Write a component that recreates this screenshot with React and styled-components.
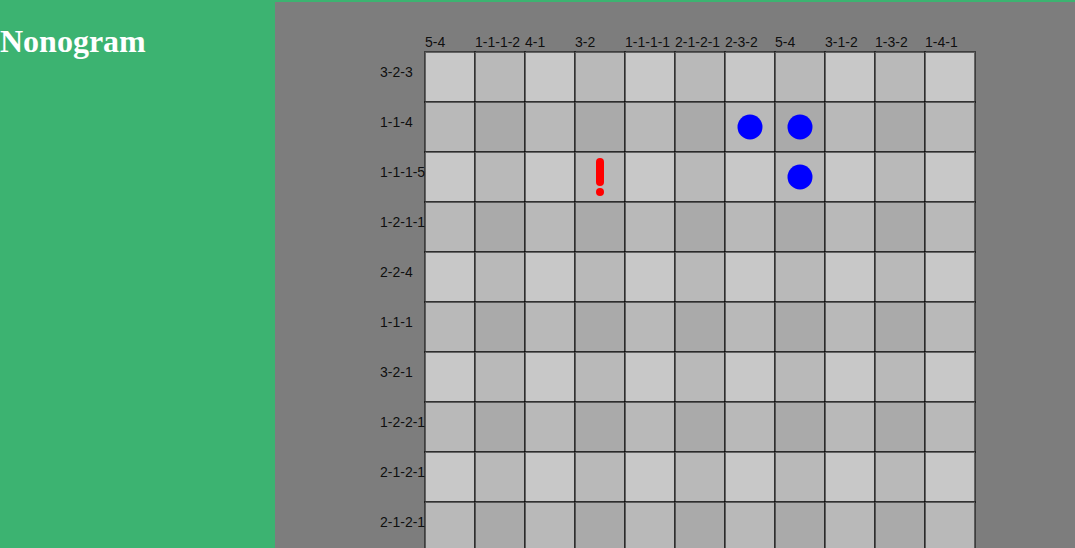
import React from "react";
import styled, { createGlobalStyle } from "styled-components";

const columnHints = ["5-4", "1-1-1-2", "4-1", "3-2", "1-1-1-1", "2-1-2-1", "2-3-2", "5-4", "3-1-2", "1-3-2", "1-4-1"];

const rowHints = ["3-2-3", "1-1-4", "1-1-1-5", "1-2-1-1", "2-2-4", "1-1-1", "3-2-1", "1-2-2-1", "2-1-2-1", "2-1-2-1"];

// Keys are "row-column"
const marks = {
  "1-6": "filled",
  "1-7": "filled",
  "2-3": "error",
  "2-7": "filled",
};

const shades = ["#c8c8c8", "#b9b9b9", "#aaaaaa"];

// Styled Components
const GlobalStyle = createGlobalStyle`
  body {
    margin: 0;
    background: mediumseagreen;
  }
`;

const Page = styled.div`
  display: flex;
  height: 100vh;
  overflow: hidden;
`;

const Sidebar = styled.aside`
  flex: 0 0 275px;
`;

const Title = styled.h1`
  margin: 23px 0 0;
  color: white;
  font-family: "Liberation Serif", "Times New Roman", serif;
  font-size: 32px;
  font-weight: bold;
  line-height: 36px;
`;

const Board = styled.main`
  flex: 1;
  min-width: 0;
  margin-top: 2px;
  padding-left: 105px;
  background: #7d7d7d;
`;

const Puzzle = styled.table`
  border-collapse: separate;
  border-spacing: 0;
  table-layout: fixed;
  width: 595px;
  color: rgba(0, 0, 0, 0.9);
  font-family: "Liberation Sans", Arial, sans-serif;
  font-size: 14px;
  line-height: 16px;
`;

const Corner = styled.td`
  width: 45px;
  padding: 0;
`;

const ColumnHint = styled.th`
  width: 50px;
  height: 48px;
  padding: 0 0 2px;
  font-weight: normal;
  text-align: left;
  vertical-align: bottom;
  white-space: nowrap;
`;

const RowHint = styled.th`
  padding: 0 0 10px;
  font-weight: normal;
  text-align: left;
  vertical-align: middle;
  white-space: nowrap;
`;

const Cell = styled.td`
  padding: 0;
`;

const CellButton = styled.button`
  display: block;
  width: 50px;
  height: 50px;
  padding: 0;
  border: 0;
  background: ${(props) => props.$shade};
  box-shadow: inset 0 0 0 1px rgba(0, 0, 0, 0.5), 0 0 0 1px rgba(0, 0, 0, 0.5);
  cursor: pointer;
`;

const MarkIcon = styled.svg`
  display: block;
`;

const Mark = ({ type }) => (
  <MarkIcon width="50" height="50" viewBox="0 0 50 50" aria-hidden="true">
    {type === "filled" ? (
      <circle cx="25" cy="25" r="12.5" fill="#0000ff" />
    ) : (
      <>
        <line x1="25" y1="10" x2="25" y2="30" stroke="#ff0000" strokeWidth="8" strokeLinecap="round" />
        <circle cx="25" cy="40" r="4" fill="#ff0000" />
      </>
    )}
  </MarkIcon>
);

const App = () => {
  return (
    <>
      <GlobalStyle />
      <Page>
        <Sidebar>
          <Title>Nonogram</Title>
        </Sidebar>
        <Board>
          <Puzzle>
            <thead>
              <tr>
                <Corner />
                {columnHints.map((hint, column) => (
                  <ColumnHint key={column} scope="col">{hint}</ColumnHint>
                ))}
              </tr>
            </thead>
            <tbody>
              {rowHints.map((rowHint, row) => (
                <tr key={row}>
                  <RowHint scope="row">{rowHint}</RowHint>
                  {columnHints.map((_, column) => {
                    const mark = marks[`${row}-${column}`];
                    return (
                      <Cell key={column}>
                        <CellButton
                          type="button"
                          $shade={shades[(row % 2) + (column % 2)]}
                          aria-label={`Row ${row + 1}, column ${column + 1}`}
                        >
                          {mark && <Mark type={mark} />}
                        </CellButton>
                      </Cell>
                    );
                  })}
                </tr>
              ))}
            </tbody>
          </Puzzle>
        </Board>
      </Page>
    </>
  );
};

export default App;
